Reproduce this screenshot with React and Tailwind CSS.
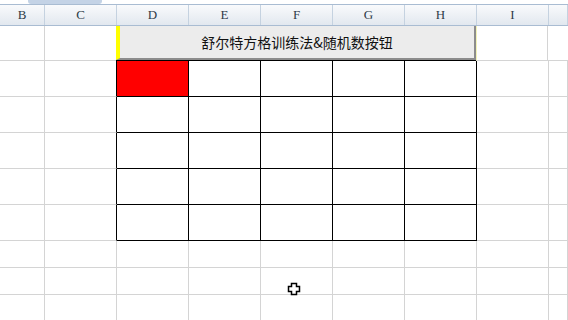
import React from "react";

const COLS = [
  { label: "B", w: "w-[45px]" },
  { label: "C", w: "w-[72px]" },
  { label: "D", w: "w-[72px]" },
  { label: "E", w: "w-[72px]" },
  { label: "F", w: "w-[72px]" },
  { label: "G", w: "w-[72px]" },
  { label: "H", w: "w-[72px]" },
  { label: "I", w: "w-[72px]" },
  { label: "", w: "flex-1" },
];

const GRID = "border-[#d4d4d4]";

// cell for a body row; table = rows 2..6 of the black grid
const Cell = ({ col, inTable, topOfTable, red }) => {
  const rightBlack = inTable && col >= 1 && col <= 6;
  const bottomBlack = (inTable || topOfTable) && col >= 2 && col <= 6;
  return (
    <div
      className={[
        COLS[col].w,
        "h-full border-r border-b",
        rightBlack ? "border-r-black" : "border-r-[#d4d4d4]",
        bottomBlack ? "border-b-black" : "border-b-[#d4d4d4]",
        red ? "bg-[#ff0000]" : "bg-white",
      ].join(" ")}
    />
  );
};

const Row = ({ h, inTable, red }) => (
  <div className={`flex ${h}`}>
    {COLS.map((c, i) => (
      <Cell key={i} col={i} inTable={inTable} red={red && i === 2} />
    ))}
  </div>
);

export default function App() {
  return (
    <div className="relative w-[568px] h-[320px] overflow-hidden bg-white font-['Liberation_Serif',serif]">
      {/* sheet tab strip */}
      <div className="h-[4px] bg-white flex">
        <div className="ml-[28px] w-[74px] h-full bg-[#c4d3e6] rounded-b-[3px]" />
      </div>

      {/* column headers */}
      <div className="flex h-[22px] border-t border-b border-[#a9bcd2] bg-linear-to-b from-[#f9fafc] to-[#e2e8ef]">
        {COLS.map((c, i) => (
          <div
            key={i}
            className={`${c.w} h-full border-r border-[#c5d2e0] flex items-center justify-center text-[13px] text-[#2e3b48]`}
          >
            {c.label}
          </div>
        ))}
      </div>

      {/* row 1 with the button */}
      <div className="flex h-[35px]">
        <div className={`w-[45px] h-full border-r border-b ${GRID}`} />
        <div className={`w-[71px] h-full border-b ${GRID}`} />
        <div className="w-[360px] h-full border-b border-b-black flex">
          <button className="flex-1 flex items-center justify-center bg-[#ececec] border-l-4 border-l-[#ffff00] border-r-2 border-r-[#8c8c8c] border-b-2 border-b-[#8c8c8c] text-[14px] text-[#111] font-['Noto_Sans_CJK_SC',sans-serif]">
            舒尔特方格训练法&amp;随机数按钮
          </button>
        </div>
        <div className={`w-[72px] h-full border-l border-l-[#f2f2b8] border-r border-b ${GRID}`} />
        <div className={`flex-1 h-full border-b ${GRID}`} />
      </div>

      {/* table rows */}
      <Row h="h-[36px]" inTable red />
      <Row h="h-[36px]" inTable />
      <Row h="h-[36px]" inTable />
      <Row h="h-[36px]" inTable />
      <Row h="h-[36px]" inTable />

      {/* plain rows */}
      <Row h="h-[27px]" />
      <Row h="h-[27px]" />
      <Row h="h-[27px]" />

      {/* mouse cursor */}
      <svg
        className="absolute left-[287px] top-[282px]"
        width="14"
        height="14"
        viewBox="0 0 14 14"
      >
        <path
          d="M4.5 1.5h5v3h3v5h-3v3h-5v-3h-3v-5h3z"
          fill="#fff"
          stroke="#000"
          strokeWidth="1.5"
        />
      </svg>
    </div>
  );
}
